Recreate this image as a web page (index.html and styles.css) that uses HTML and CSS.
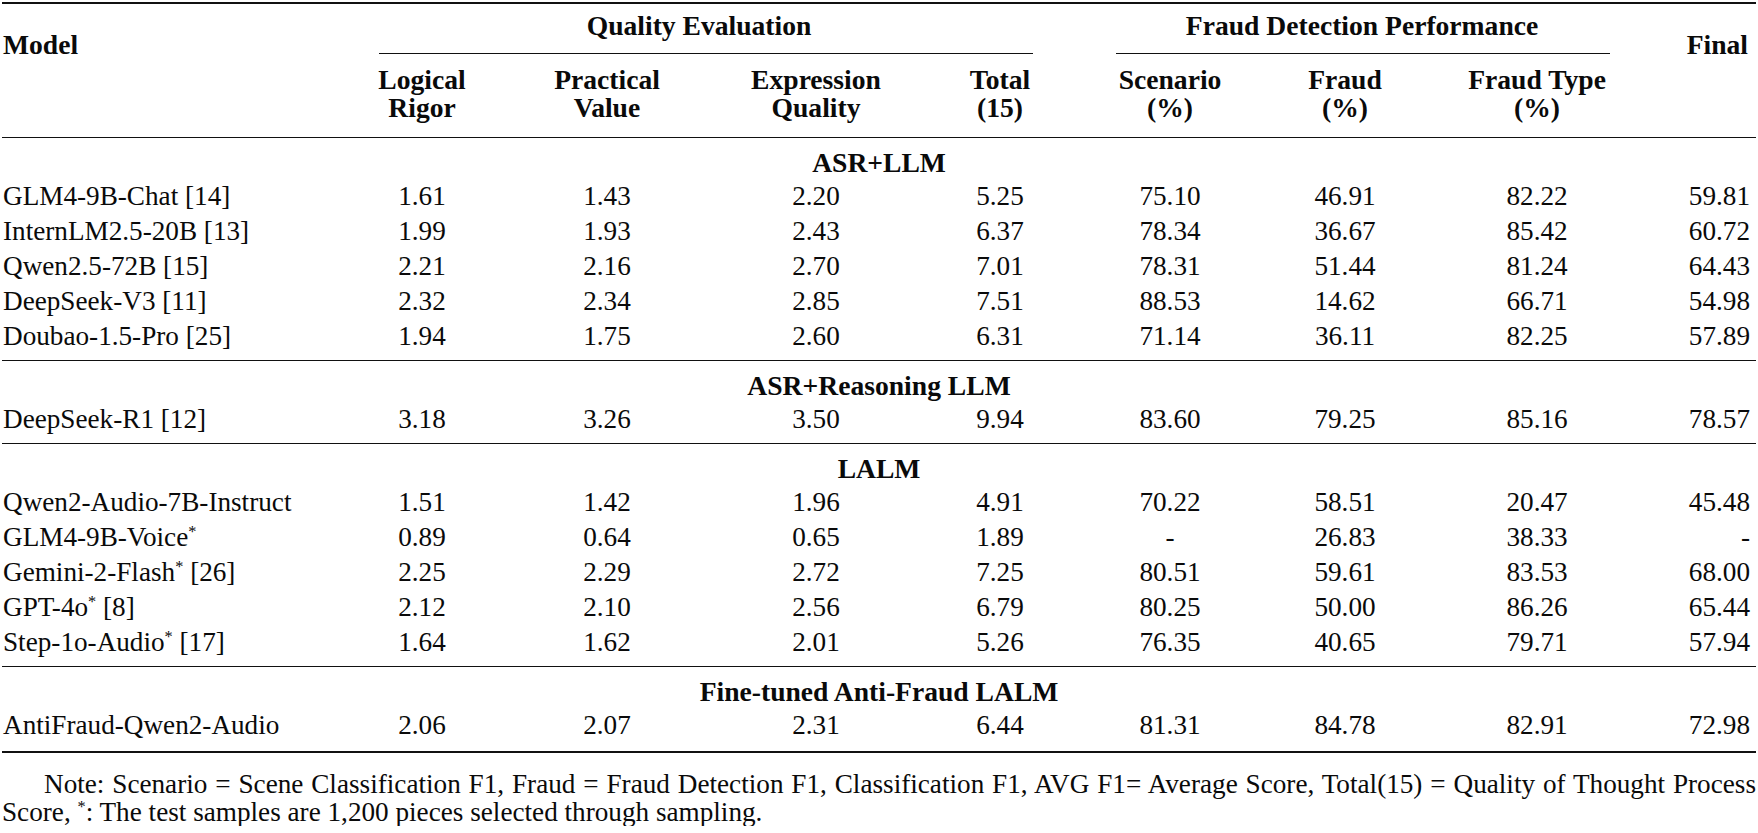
FILE: index.html
```html
<!DOCTYPE html>
<html lang="en">
<head>
<meta charset="utf-8">
<title>Results table</title>
<link rel="stylesheet" href="styles.css">
</head>
<body>
<div class="page">
<table class="results">
  <colgroup>
    <col class="c-model">
    <col class="c-logic">
    <col class="c-pract">
    <col class="c-expr">
    <col class="c-total">
    <col class="c-scen">
    <col class="c-fraud">
    <col class="c-type">
    <col class="c-final">
  </colgroup>
  <thead>
    <tr class="head1">
      <th class="model-h">Model</th>
      <th colspan="4" class="group-h"><div class="group-title">Quality Evaluation</div><div class="cmid cmid-q"></div></th>
      <th colspan="3" class="group-h"><div class="group-title">Fraud Detection Performance</div><div class="cmid cmid-f"></div></th>
      <th class="final-h">Final</th>
    </tr>
    <tr class="head2">
      <th></th>
      <th>Logical<br>Rigor</th>
      <th>Practical<br>Value</th>
      <th>Expression<br>Quality</th>
      <th>Total<br>(15)</th>
      <th>Scenario<br>(%)</th>
      <th>Fraud<br>(%)</th>
      <th>Fraud Type<br>(%)</th>
      <th></th>
    </tr>
  </thead>
  <tbody>
    <tr class="grp first"><td colspan="9">ASR+LLM</td></tr>
    <tr><td>GLM4-9B-Chat [14]</td><td>1.61</td><td>1.43</td><td>2.20</td><td>5.25</td><td>75.10</td><td>46.91</td><td>82.22</td><td>59.81</td></tr>
    <tr><td>InternLM2.5-20B [13]</td><td>1.99</td><td>1.93</td><td>2.43</td><td>6.37</td><td>78.34</td><td>36.67</td><td>85.42</td><td>60.72</td></tr>
    <tr><td>Qwen2.5-72B [15]</td><td>2.21</td><td>2.16</td><td>2.70</td><td>7.01</td><td>78.31</td><td>51.44</td><td>81.24</td><td>64.43</td></tr>
    <tr><td>DeepSeek-V3 [11]</td><td>2.32</td><td>2.34</td><td>2.85</td><td>7.51</td><td>88.53</td><td>14.62</td><td>66.71</td><td>54.98</td></tr>
    <tr class="last"><td>Doubao-1.5-Pro [25]</td><td>1.94</td><td>1.75</td><td>2.60</td><td>6.31</td><td>71.14</td><td>36.11</td><td>82.25</td><td>57.89</td></tr>

    <tr class="grp ruled"><td colspan="9">ASR+Reasoning LLM</td></tr>
    <tr class="last"><td>DeepSeek-R1 [12]</td><td>3.18</td><td>3.26</td><td>3.50</td><td>9.94</td><td>83.60</td><td>79.25</td><td>85.16</td><td>78.57</td></tr>

    <tr class="grp ruled"><td colspan="9">LALM</td></tr>
    <tr><td>Qwen2-Audio-7B-Instruct</td><td>1.51</td><td>1.42</td><td>1.96</td><td>4.91</td><td>70.22</td><td>58.51</td><td>20.47</td><td>45.48</td></tr>
    <tr><td>GLM4-9B-Voice<sup>*</sup></td><td>0.89</td><td>0.64</td><td>0.65</td><td>1.89</td><td>-</td><td>26.83</td><td>38.33</td><td>-</td></tr>
    <tr><td>Gemini-2-Flash<sup>*</sup> [26]</td><td>2.25</td><td>2.29</td><td>2.72</td><td>7.25</td><td>80.51</td><td>59.61</td><td>83.53</td><td>68.00</td></tr>
    <tr><td>GPT-4o<sup>*</sup> [8]</td><td>2.12</td><td>2.10</td><td>2.56</td><td>6.79</td><td>80.25</td><td>50.00</td><td>86.26</td><td>65.44</td></tr>
    <tr class="last"><td>Step-1o-Audio<sup>*</sup> [17]</td><td>1.64</td><td>1.62</td><td>2.01</td><td>5.26</td><td>76.35</td><td>40.65</td><td>79.71</td><td>57.94</td></tr>

    <tr class="grp ruled"><td colspan="9">Fine-tuned Anti-Fraud LALM</td></tr>
    <tr class="last bottom"><td>AntiFraud-Qwen2-Audio</td><td>2.06</td><td>2.07</td><td>2.31</td><td>6.44</td><td>81.31</td><td>84.78</td><td>82.91</td><td>72.98</td></tr>
  </tbody>
</table>
<div class="note">
  <div class="note-line1">Note: Scenario = Scene Classification F1, Fraud = Fraud Detection F1, Classification F1, AVG F1= Average Score, Total(15) = Quality of Thought Process</div>
  <div class="note-line2">Score, <sup>*</sup>: The test samples are 1,200 pieces selected through sampling.</div>
</div>
</div>
</body>
</html>
```

FILE: styles.css
```css
html, body {
  margin: 0;
  padding: 0;
  background: #ffffff;
}

.page {
  padding: 2px 2px 0 2px;
  font-family: "Liberation Serif", "Times New Roman", serif;
  color: #0a0a0a;
  font-size: 27.2px;
}

.results {
  width: 1754px;
  table-layout: fixed;
  border-collapse: separate;
  border-spacing: 0;
}

.c-model { width: 328px; }
.c-logic { width: 184px; }
.c-pract { width: 186px; }
.c-expr { width: 232px; }
.c-total { width: 136px; }
.c-scen { width: 204px; }
.c-fraud { width: 146px; }
.c-type { width: 238px; }
.c-final { width: 100px; }

.results th,
.results td {
  padding: 0;
  text-align: center;
  vertical-align: top;
  white-space: nowrap;
}

.results th {
  font-weight: bold;
  font-size: 27.6px;
}

.head1 th {
  border-top: 2.5px solid #111;
  line-height: 30px;
}

.model-h {
  text-align: left !important;
  padding: 25.5px 0 0 1px !important;
}

.final-h {
  text-align: right !important;
  padding: 25.5px 8px 0 0 !important;
}

.group-h {
  padding: 6.5px 0 6px 0 !important;
}

.group-title {
  line-height: 30px;
}

.cmid {
  margin-top: 12px;
  border-top: 1.2px solid #111;
}

.cmid-q { margin-left: 49px; margin-right: 35px; }
.cmid-f { margin-left: 48px; margin-right: 46px; }

.head2 th {
  line-height: 28px;
  padding: 6px 0 15px 0;
  border-bottom: 1.5px solid #111;
}

.results tbody td {
  line-height: 35px;
}

.results tbody td:first-child {
  text-align: left;
  padding-left: 1px;
}

.results tbody td:last-child {
  text-align: right;
  padding-right: 6px;
}

.results tbody tr.grp td {
  text-align: center;
  font-weight: bold;
  font-size: 27.6px;
  line-height: 32px;
  padding: 9px 0 0 0;
}

.results tbody tr.ruled td {
  border-top: 1.5px solid #111;
}

.results tbody tr.last td {
  padding-bottom: 6px;
}

.results tbody tr.bottom td {
  padding-bottom: 8px;
  border-bottom: 2.5px solid #111;
}

sup {
  font-size: 0.6em;
  line-height: 0;
  vertical-align: 0.55em;
}

.note {
  margin-top: 17px;
  padding-left: 42px;
  line-height: 28px;
}

.note-line1 {
  white-space: nowrap;
  text-align: justify;
  text-align-last: justify;
}

.note-line2 {
  margin-left: -42px;
  white-space: nowrap;
}
```
